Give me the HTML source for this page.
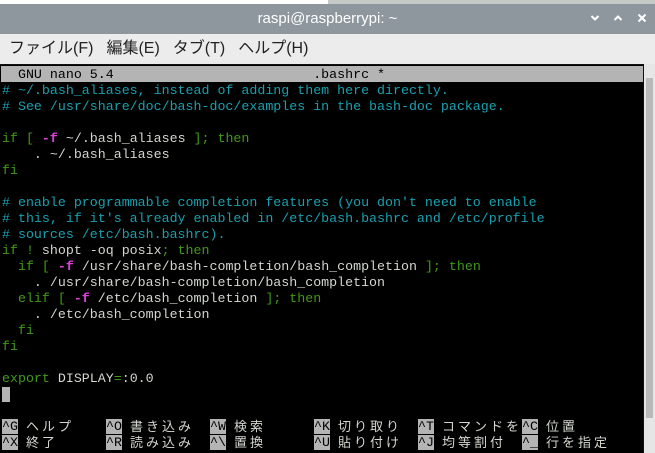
<!DOCTYPE html>
<html><head><meta charset="utf-8"><style>
*{margin:0;padding:0;box-sizing:border-box}
body{width:655px;height:453px;overflow:hidden;position:relative;background:#edecec;font-family:"Liberation Sans","Noto Sans CJK JP",sans-serif}
#top1{position:absolute;left:0;top:0;width:328px;height:4px;background:#fff}
#top2{position:absolute;left:328px;top:0;width:327px;height:4px;background:#c5cac6}
#title{position:absolute;left:0;top:4px;width:655px;height:30px;background:#8e979e;color:#fff;font-size:15px;text-align:center;line-height:30px}
.ic{position:absolute;top:14px}
#menu{position:absolute;left:0;top:34px;width:655px;height:30px;background:#edecec;font-size:16px;line-height:30px;color:#222;padding-left:9px}
#menu span{margin-right:13px}
#term{position:absolute;left:0;top:64px;width:644px;height:389px;background:#000;border-top:1px solid #111;border-right:1px solid #111}
#sb{position:absolute;left:644px;top:64px;width:11px;height:389px;background:#e6e6e6}
#sbt{position:absolute;left:646px;top:78px;width:7px;height:340px;background:#b9b9b9}
.r{position:absolute;left:2px;height:16px;line-height:16px;margin-top:2px;font-family:"Liberation Mono","Noto Sans CJK JP",monospace;font-size:13.3px;color:#d3d7cf;white-space:pre}
.c{color:#18a0b0}.g{color:#3f9a17}.m{color:#e040e0;font-weight:bold}
#hdr{position:absolute;left:1px;top:66px;width:642px;height:16px;background:#b4b4b4}
.k{background:#b4b4b4;color:#000}
.j{position:absolute;height:16px;line-height:16px;margin-top:2px;font-size:13px;color:#d3d7cf;white-space:pre;letter-spacing:3px}
</style></head><body>
<div id="top1"></div><div id="top2"></div>
<div id="title">raspi@raspberrypi: ~</div>
<svg class="ic" style="left:590px" width="10" height="8" viewBox="0 0 10 8"><path d="M1.5 2 L5 5.5 L8.5 2" stroke="#fff" stroke-width="2" fill="none"/></svg>
<svg class="ic" style="left:613px" width="10" height="8" viewBox="0 0 10 8"><path d="M1.5 6 L5 2.5 L8.5 6" stroke="#fff" stroke-width="2" fill="none"/></svg>
<svg class="ic" style="left:637px;top:13px" width="10" height="10" viewBox="0 0 10 10"><path d="M1.5 1.5 L8.5 8.5 M8.5 1.5 L1.5 8.5" stroke="#fff" stroke-width="2" fill="none"/></svg>
<div id="menu"><span>ファイル(F)</span><span>編集(E)</span><span>タブ(T)</span><span>ヘルプ(H)</span></div>
<div id="term"></div>
<div id="sb"></div><div id="sbt"></div>
<div id="hdr"></div>
<div class="r" style="top:65px;color:#000">  GNU nano 5.4                         .bashrc *</div>
<div class="r c" style="top:81px"># ~/.bash_aliases, instead of adding them here directly.</div>
<div class="r c" style="top:97px"># See /usr/share/doc/bash-doc/examples in the bash-doc package.</div>
<div class="r" style="top:129px"><span class="g">if [ </span><span class="m">-f</span> ~/.bash_aliases <span class="g">]; then</span></div>
<div class="r" style="top:145px">    . ~/.bash_aliases</div>
<div class="r g" style="top:161px">fi</div>
<div class="r c" style="top:193px"># enable programmable completion features (you don't need to enable</div>
<div class="r c" style="top:209px"># this, if it's already enabled in /etc/bash.bashrc and /etc/profile</div>
<div class="r c" style="top:225px"># sources /etc/bash.bashrc).</div>
<div class="r" style="top:241px"><span class="g">if !</span> shopt -oq posix<span class="g">; then</span></div>
<div class="r" style="top:257px">  <span class="g">if [ </span><span class="m">-f</span> /usr/share/bash-completion/bash_completion <span class="g">]; then</span></div>
<div class="r" style="top:273px">    . /usr/share/bash-completion/bash_completion</div>
<div class="r" style="top:289px">  <span class="g">elif [ </span><span class="m">-f</span> /etc/bash_completion <span class="g">]; then</span></div>
<div class="r" style="top:305px">    . /etc/bash_completion</div>
<div class="r g" style="top:321px">  fi</div>
<div class="r g" style="top:337px">fi</div>
<div class="r" style="top:369px"><span class="g">export</span> DISPLAY<span class="g">=</span>:0.0</div>
<div style="position:absolute;left:2px;top:387px;width:8px;height:15px;background:#b4b4b4"></div>

<div class="r" style="top:417px"><span class="k">^G</span></div><div class="j" style="left:26px;top:417px">ヘルプ</div>
<div class="r" style="top:417px;left:106px"><span class="k">^O</span></div><div class="j" style="left:130px;top:417px">書き込み</div>
<div class="r" style="top:417px;left:210px"><span class="k">^W</span></div><div class="j" style="left:234px;top:417px">検索</div>
<div class="r" style="top:417px;left:314px"><span class="k">^K</span></div><div class="j" style="left:338px;top:417px">切り取り</div>
<div class="r" style="top:417px;left:418px"><span class="k">^T</span></div><div class="j" style="left:442px;top:417px">コマンドを</div>
<div class="r" style="top:417px;left:522px"><span class="k">^C</span></div><div class="j" style="left:546px;top:417px">位置</div>

<div class="r" style="top:433px"><span class="k">^X</span></div><div class="j" style="left:26px;top:433px">終了</div>
<div class="r" style="top:433px;left:106px"><span class="k">^R</span></div><div class="j" style="left:130px;top:433px">読み込み</div>
<div class="r" style="top:433px;left:210px"><span class="k">^\</span></div><div class="j" style="left:234px;top:433px">置換</div>
<div class="r" style="top:433px;left:314px"><span class="k">^U</span></div><div class="j" style="left:338px;top:433px">貼り付け</div>
<div class="r" style="top:433px;left:418px"><span class="k">^J</span></div><div class="j" style="left:442px;top:433px">均等割付</div>
<div class="r" style="top:433px;left:522px"><span class="k">^_</span></div><div class="j" style="left:546px;top:433px">行を指定</div>
</body></html>
